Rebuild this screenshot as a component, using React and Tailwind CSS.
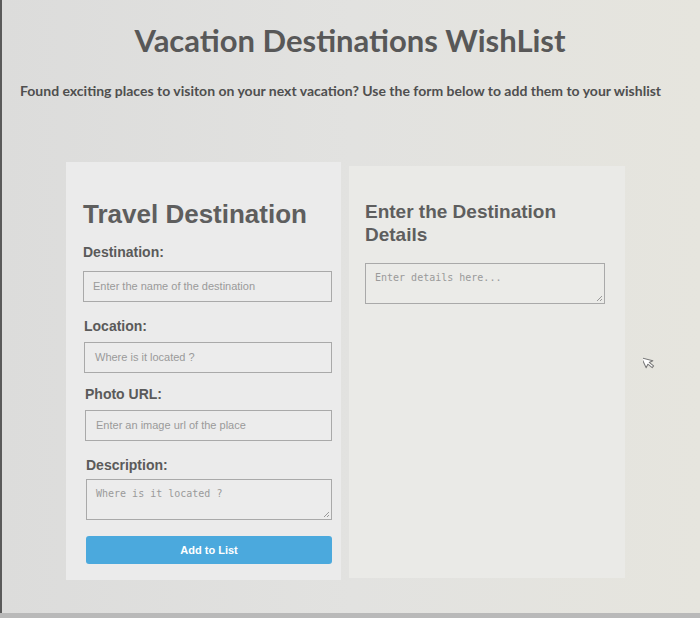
export default function App() {
  return (
    <div className="w-[700px] h-[618px] overflow-hidden relative bg-gradient-to-r from-[#dcdcdb] via-[#e2e2e0] to-[#e6e5de] text-[#555]">
      <div className="absolute left-0 top-0 bottom-0 w-[2px] bg-[#5a5a5a]" />
      <div className="absolute left-0 right-0 bottom-0 h-[5px] bg-[#b9b9b9]" />
      <h1 className="pt-[20px] text-center text-[31px] leading-[40px] font-bold text-[#585858] [font-family:Lato,'Liberation_Sans',sans-serif]">
        Vacation Destinations WishList
      </h1>
      <p className="mt-[22px] ml-[20px] text-[14px] leading-[17px] font-bold text-[#4f4f4f] [font-family:Lato,'Liberation_Sans',sans-serif]">
        Found exciting places to visiton on your next vacation? Use the form below to add them to your wishlist
      </p>
      <div className="mt-[63px] ml-[66px] flex gap-[8px] items-start [font-family:'Liberation_Sans',Arial,sans-serif]">
        <div className="w-[275px] h-[418px] bg-[#ebebeb] pl-[17px] pr-[9px] pt-[36px]">
          <h2 className="text-[26px] leading-[32px] font-bold text-[#5e5e5e]">Travel Destination</h2>
          <div className="mt-[13px] text-[14px] leading-[18px] font-bold text-[#5a5a5a]">Destination:</div>
          <div className="mt-[10px] h-[31px] border border-[#a9a9a9] bg-[#ececec] flex items-center px-[9px] text-[11px] text-[#9a9a9a]">Enter the name of the destination</div>
          <div className="mt-[15px] text-[14px] leading-[18px] font-bold text-[#5a5a5a] pl-[1px]">Location:</div>
          <div className="mt-[7px] h-[31px] border border-[#a9a9a9] bg-[#ececec] flex items-center px-[10px] text-[11px] text-[#9a9a9a] ml-[1px]">Where is it located ?</div>
          <div className="mt-[12px] text-[14px] leading-[18px] font-bold text-[#5a5a5a] pl-[2px]">Photo URL:</div>
          <div className="mt-[7px] h-[31px] border border-[#a9a9a9] bg-[#ececec] flex items-center px-[10px] text-[11px] text-[#9a9a9a] ml-[2px]">Enter an image url of the place</div>
          <div className="mt-[15px] text-[14px] leading-[18px] font-bold text-[#5a5a5a] pl-[3px]">Description:</div>
          <div className="relative mt-[5px] h-[41px] border border-[#a9a9a9] bg-[#ececec] px-[9px] pt-[6px] text-[10px] text-[#9a9a9a] ml-[3px] [font-family:'DejaVu_Sans_Mono',monospace]">
            Where is it located ?
            <svg className="absolute right-[1px] bottom-[1px]" width="7" height="7" viewBox="0 0 7 7"><path d="M6 1L1 6M6 4L4 6" stroke="#999" strokeWidth="1" /></svg>
          </div>
          <div className="mt-[16px] ml-[3px] h-[28px] rounded-[3px] bg-[#4ba9dd] flex items-center justify-center text-[11px] font-bold text-white">Add to List</div>
        </div>
        <div className="w-[276px] h-[412px] mt-[4px] bg-[#eaeae7] pl-[16px] pr-[20px] pt-[34px]">
          <h2 className="text-[19px] leading-[23px] font-bold text-[#5e5e5e]">Enter the Destination Details</h2>
          <div className="relative mt-[17px] h-[41px] border border-[#a9a9a9] bg-[#ebebe8] px-[9px] pt-[6px] text-[10px] text-[#9a9a9a] [font-family:'DejaVu_Sans_Mono',monospace]">
            Enter details here...
            <svg className="absolute right-[1px] bottom-[1px]" width="7" height="7" viewBox="0 0 7 7"><path d="M6 1L1 6M6 4L4 6" stroke="#999" strokeWidth="1" /></svg>
          </div>
        </div>
      </div>
      <svg className="absolute left-[643px] top-[354px]" width="12" height="16" viewBox="0 0 12 16">
        <path d="M1 1 L1 12 L4 9.5 L6.5 14.5 L8.5 13.5 L6 8.5 L10 8.5 Z" fill="#fff" stroke="#777" strokeWidth="1" strokeLinejoin="round" transform="rotate(-25 6 8)" />
      </svg>
    </div>
  );
}
